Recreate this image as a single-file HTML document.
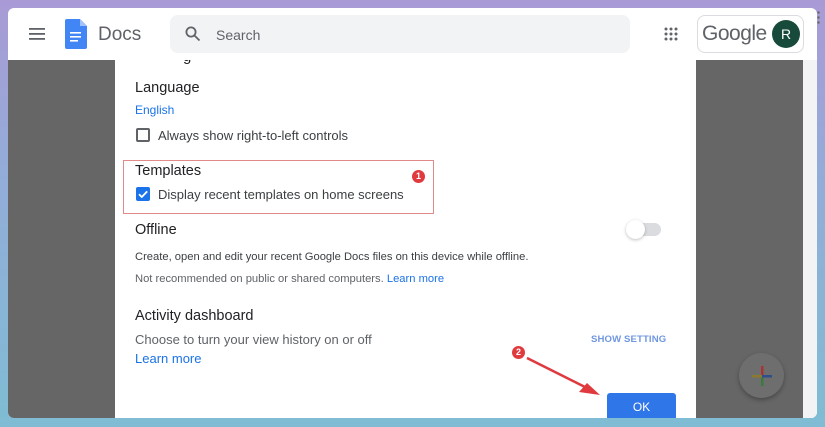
<!DOCTYPE html>
<html><head><style>
*{margin:0;padding:0;box-sizing:border-box}
body{width:825px;height:427px;overflow:hidden;background:linear-gradient(180deg,#a99ad6 0%,#93acd8 40%,#7fbcd4 100%);font-family:"Liberation Sans",Roboto,sans-serif;position:relative}
.win{position:absolute;left:8px;top:8px;width:809px;height:410px;background:#fff;border-radius:6px;overflow:hidden}
.gray{position:absolute;left:0;top:52px;width:795px;height:358px;background:#666}
.strip{position:absolute;left:795px;top:52px;width:14px;height:358px;background:#f1f3f4}
.dlg{position:absolute;left:107px;top:52px;width:581px;height:358px;background:#fff;overflow:hidden}
.t{position:absolute;color:#202124;white-space:nowrap;line-height:1}
.h{font-size:14.5px}
.s{font-size:13px;color:#3c4043}
.xs{font-size:11.2px;color:#5f6368}
.b{color:#1a73e8}
</style></head><body>
<div class="win">
  <svg style="position:absolute;left:21px;top:20px" width="16" height="12"><rect y="0" width="16" height="1.8" fill="#5f6368"/><rect y="5" width="16" height="1.8" fill="#5f6368"/><rect y="10" width="16" height="1.8" fill="#5f6368"/></svg>
  <svg style="position:absolute;left:57px;top:11px" width="22" height="30" viewBox="0 0 22 30"><path d="M2 0h13l7 7v21a2 2 0 0 1-2 2H2a2 2 0 0 1-2-2V2a2 2 0 0 1 2-2z" fill="#4285f4"/><path d="M15 0v7h7z" fill="#a1c2fa"/><rect x="5" y="13" width="11" height="1.6" fill="#fff"/><rect x="5" y="17" width="11" height="1.6" fill="#fff"/><rect x="5" y="21" width="8" height="1.6" fill="#fff"/></svg>
  <div class="t" style="left:90px;top:16px;font-size:19px;color:#5f6368;line-height:normal">Docs</div>
  <div style="position:absolute;left:162px;top:7px;width:460px;height:38px;background:#f1f3f4;border-radius:8px"></div>
  <svg style="position:absolute;left:177px;top:18px" width="16" height="16" viewBox="0 0 16 16"><circle cx="6" cy="6" r="4.6" stroke="#5f6368" stroke-width="1.8" fill="none"/><path d="M9.5 9.5l5 5" stroke="#5f6368" stroke-width="1.8"/></svg>
  <div class="t" style="left:208px;top:19px;font-size:14px;color:#5f6368;line-height:normal">Search</div>
  <svg style="position:absolute;left:656px;top:19px" width="14" height="14"><g fill="#5f6368"><circle cx="2" cy="2" r="1.5"/><circle cx="7" cy="2" r="1.5"/><circle cx="12" cy="2" r="1.5"/><circle cx="2" cy="7" r="1.5"/><circle cx="7" cy="7" r="1.5"/><circle cx="12" cy="7" r="1.5"/><circle cx="2" cy="12" r="1.5"/><circle cx="7" cy="12" r="1.5"/><circle cx="12" cy="12" r="1.5"/></g></svg>
  <div style="position:absolute;left:689px;top:7px;width:107px;height:38px;border:1px solid #dadce0;border-radius:8px"></div>
  <div class="t" style="left:694px;top:14px;font-size:21px;color:#5f6368;letter-spacing:-0.5px;line-height:normal">Google</div>
  <div style="position:absolute;left:764px;top:12px;width:28px;height:28px;border-radius:50%;background:#174a3a;color:#fff;font-size:14px;text-align:center;line-height:28px">R</div>
  <div class="gray"></div><div class="strip"></div>
  <div style="position:absolute;left:731px;top:345px;width:45px;height:45px;border-radius:50%;background:#6e6e6e;box-shadow:0 2px 5px rgba(0,0,0,.3)"></div>
  <svg style="position:absolute;left:744px;top:358px" width="20" height="20"><rect x="9" y="0" width="2.5" height="10" fill="#a33"/><rect x="9" y="10" width="2.5" height="10" fill="#3a7a3a"/><rect x="0" y="9" width="10" height="2.5" fill="#8a7a30"/><rect x="10" y="9" width="10" height="2.5" fill="#2f4f8a"/></svg>
  <div class="dlg">
    <div class="t" style="left:68px;top:-11px;font-size:15px">g</div>
    <div class="t h" style="left:20px;top:21px">Language</div>
    <div class="t b" style="left:20px;top:44px;font-size:12px">English</div>
    <div style="position:absolute;left:21px;top:68px;width:14px;height:14px;border:2px solid #5f6368;border-radius:2px"></div>
    <div class="t s" style="left:43px;top:68.5px">Always show right-to-left controls</div>
    <div style="position:absolute;left:8px;top:100px;width:311px;height:54px;border:1.5px solid #e08a8a"></div>
    <div class="t h" style="left:20px;top:104px">Templates</div>
    <div style="position:absolute;left:297px;top:110px;width:13px;height:13px;border-radius:50%;background:#e03a3e;color:#fff;font-size:9px;font-weight:bold;text-align:center;line-height:13px">1</div>
    <div style="position:absolute;left:21px;top:127px;width:14px;height:14px;background:#1a73e8;border-radius:2px"></div>
    <svg style="position:absolute;left:21px;top:127px" width="14" height="14"><path d="M3 7.2l2.8 2.8L11.2 4.4" stroke="#fff" stroke-width="1.8" fill="none"/></svg>
    <div class="t s" style="left:43px;top:127.5px">Display recent templates on home screens</div>
    <div class="t h" style="left:20px;top:163px">Offline</div>
    <div style="position:absolute;left:522px;top:163px;width:24px;height:13px;border-radius:7px;background:#dadce0"></div>
    <div style="position:absolute;left:511px;top:160px;width:19px;height:19px;border-radius:50%;background:#fff;box-shadow:0 1px 3px rgba(0,0,0,.25)"></div>
    <div class="t xs" style="left:20px;top:192px;color:#3c4043">Create, open and edit your recent Google Docs files on this device while offline.</div>
    <div class="t xs" style="left:20px;top:214px">Not recommended on public or shared computers. <span class="b">Learn more</span></div>
    <div class="t h" style="left:20px;top:249px">Activity dashboard</div>
    <div class="t s" style="left:20px;top:272.5px;color:#5f6368">Choose to turn your view history on or off</div>
    <div class="t b" style="left:20px;top:291.5px;font-size:13px">Learn more</div>
    <div class="t b" style="left:476px;top:275px;font-size:9.6px;font-weight:bold;letter-spacing:.1px;color:#6f97e0">SHOW SETTING</div>
    <div style="position:absolute;left:397px;top:286px;width:13px;height:13px;border-radius:50%;background:#e03a3e;color:#fff;font-size:9px;font-weight:bold;text-align:center;line-height:13px">2</div>
    <svg style="position:absolute;left:400px;top:290px" width="100" height="60"><path d="M12 8L78 41" stroke="#e03a3e" stroke-width="2.5"/><path d="M85 45L64 42L72 33z" fill="#e03a3e"/></svg>
    <div style="position:absolute;left:492px;top:333px;width:69px;height:30px;background:#2f76e8;border-radius:3px;color:#fff;font-size:12px;text-align:center;line-height:28px">OK</div>
  </div>
</div>
<div style="position:absolute;left:817px;top:10px;width:3px;height:14px;background:radial-gradient(circle,#666 40%,transparent 45%) 0 0/3px 5px"></div>
</body></html>
